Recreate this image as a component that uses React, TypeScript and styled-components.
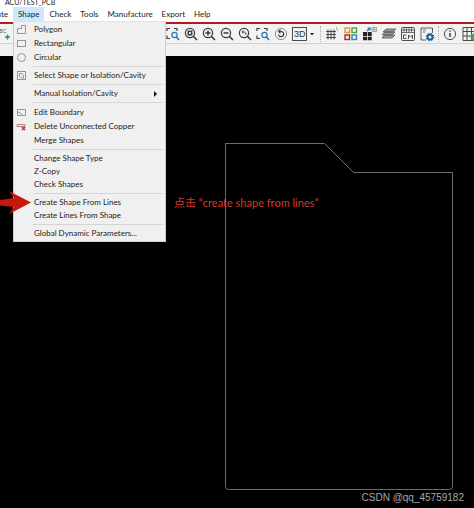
import React from "react";
import styled, { createGlobalStyle, css } from "styled-components";

const GlobalStyle = createGlobalStyle`
  * { box-sizing: border-box; }
  body { margin: 0; background: #000; font-family: Lato, "Noto Sans", sans-serif; color: #222; }
`;

const Window = styled.div`
  position: relative;
  display: flex;
  flex-direction: column;
  min-height: 100vh;
  overflow: hidden;
`;

const TitleBar = styled.header`
  display: flex;
  align-items: flex-end;
  height: 7px;
  padding-left: 5px;
  overflow: hidden;
  background: #fff;
  font-size: 7px;
  line-height: 10px;
  white-space: nowrap;
`;

const MenuBar = styled.nav`
  display: flex;
  gap: 1px;
  height: 15px;
  background: #fff;
`;

const MenuButton = styled.button<{ $open?: boolean; $clipped?: boolean }>`
  height: 14px;
  padding: 0 ${(p) => (p.$open ? "5px" : "4px")};
  border: 0;
  background: ${(p) => (p.$open ? "#cce8fb" : "transparent")};
  color: #222;
  font: 8px/14px Lato, "Noto Sans", sans-serif;
  white-space: nowrap;
  ${(p) => p.$clipped && css`
    width: 12px;
    padding: 0 4px 0 0;
    display: flex;
    justify-content: flex-end;
    overflow: hidden;
  `}
`;

const ToolBar = styled.div`
  display: flex;
  align-items: center;
  height: 22px;
  border-top: 2px solid #b01c22;
  border-bottom: 1px solid #d2d2d2;
  background: #f2f2f2;
  overflow: hidden;
`;

const ToolGroup = styled.div<{ $start?: boolean; $loose?: boolean }>`
  display: flex;
  align-items: center;
  gap: ${(p) => (p.$loose ? "3px" : "2px")};
  flex: none;
  ${(p) => p.$start && css`
    width: 165px;
    justify-content: flex-start;
  `}
`;

const ToolButton = styled.button<{ $wide?: boolean }>`
  display: flex;
  flex: none;
  align-items: center;
  justify-content: center;
  width: ${(p) => (p.$wide ? "26px" : "16px")};
  height: 18px;
  padding: 0;
  border: 0;
  background: none;
`;

const Grip = styled.span`
  flex: none;
  width: 2px;
  height: 16px;
  margin: 0 2px 0 3px;
  border-left: 1px dotted #aaa;
`;

const SubBar = styled.div`
  height: 12px;
  background: #f0f0f0;
`;

const Workspace = styled.main`
  position: relative;
  flex: 1;
  background: #000;
`;

const Outline = styled.svg`
  position: absolute;
  left: 225px;
  top: 87px;
`;

const Note = styled.p`
  position: absolute;
  left: 174px;
  top: 139px;
  margin: 0;
  color: #d23b2c;
  font: 11px/16px Lato, "Noto Sans CJK SC", sans-serif;
  white-space: nowrap;
`;

const Watermark = styled.footer`
  position: absolute;
  right: 10px;
  bottom: 3px;
  color: #a8a8a8;
  font: 10px/14px "Liberation Sans", sans-serif;
`;

const Menu = styled.div`
  position: absolute;
  left: 13px;
  top: 21px;
  width: 153px;
  padding-bottom: 1px;
  border: 1px solid #ccc;
  border-top-color: #e2e2e2;
  background: #f0f0f0;
`;

const MenuItem = styled.button<{ $tall?: boolean }>`
  display: grid;
  grid-template-columns: 20px 1fr 12px;
  align-items: center;
  width: 100%;
  height: ${(p) => (p.$tall ? "14px" : "13px")};
  padding: 0;
  border: 0;
  background: none;
  color: #222;
  font: 8px/13px Lato, "Noto Sans", sans-serif;
  text-align: left;
  white-space: nowrap;
`;

const ItemIcon = styled.svg`
  margin-left: 2px;
`;

const Separator = styled.hr`
  height: 1px;
  margin: 2px 2px 2px 19px;
  border: 0;
  background: #d5d5d5;
`;

const Pointer = styled.svg`
  position: absolute;
  left: 0;
  top: 190px;
`;

const Glyph = ({ children, w = 16 }: { children: React.ReactNode; w?: number }) => (
  <svg width={w} height="16" viewBox={`0 0 ${w} 16`} fill="none" stroke="#3b3b3b" strokeWidth="1.2" aria-hidden="true">
    {children}
  </svg>
);

const Lens = ({ children }: { children?: React.ReactNode }) => (
  <Glyph>
    <circle cx="7" cy="7" r="4.6" />
    <path d="M10.4 10.4 14 14" strokeWidth="1.5" />
    {children}
  </Glyph>
);

const AreaLens = () => (
  <Glyph>
    <path d="M2 5V2.500H5M9 2.500H12V5M2 9.500V12.500H5" />
    <g stroke="#2878b4">
      <circle cx="9.500" cy="9" r="2.600" />
      <path d="m11.500 11 2.500 3" strokeWidth="1.500" />
    </g>
  </Glyph>
);

const viewTools: [string, React.ReactNode][] = [
  ["Zoom by points", <AreaLens />],
  ["Zoom fit", <Lens><rect x="5.300" y="5.300" width="3.400" height="3.400" strokeWidth="1.500" /></Lens>],
  ["Zoom in", <Lens><path d="M4.500 7h5M7 4.500v5" strokeWidth="1.500" /></Lens>],
  ["Zoom out", <Lens><path d="M4.500 7h5" strokeWidth="1.500" /></Lens>],
  ["Zoom previous", <Lens><path d="M5 6h2.500q1.500 0 1.500 3M6.500 4.500 5 6l1.500 1.500" strokeWidth=".9" /></Lens>],
  ["Zoom selection", <AreaLens />],
  ["Redraw", <Glyph><circle cx="8" cy="8" r="5.600" stroke="#777" strokeWidth=".8" /><path d="M6 5.500h2.500a2.600 2.600 0 1 1-3 3M7.500 3.700 5.700 5.500l1.800 1.700" /></Glyph>],
];

const displayTools: [string, React.ReactNode][] = [
  ["Grid", <Glyph><path d="M2 5.500h10M2 8.500h10M2 11.500h10M4 3.500v10M7 3.500v10M10 3.500v10" strokeWidth=".9" /><path d="M12 2h1M13.500 3.500v1" strokeWidth=".8" /></Glyph>],
  ["Colors", <Glyph><g strokeWidth="1.400"><rect x="2" y="2" width="4.500" height="4.500" stroke="#d3a52b" /><rect x="9" y="2" width="4.500" height="4.500" stroke="#5c9d3b" /><rect x="2" y="9" width="4.500" height="4.500" stroke="#b52626" /><rect x="9" y="9" width="4.500" height="4.500" stroke="#3185b5" /></g></Glyph>],
  ["Shadow mode", <Glyph><path d="M1 6h4v4H1zM1 10.700h4v3.500H1zM5.700 6h4v4h-4zM5.700 10.700h4v3.500h-4z" fill="#222" stroke="none" /><path d="m5 5 3-3M5.500 2H8v2.500" stroke="#2878b4" /><path d="M10 1.500h4.500v4H10zM12.200 1.500v4M10 3.500h4.500" stroke="#888" strokeWidth=".7" /></Glyph>],
  ["Layers", <Glyph><path d="m1 12 3-3h10l-3 3zM1 9l3-3h10l-3 3zM2 6l3-3h10l-3 3z" fill="#999" stroke="#555" strokeWidth=".8" /></Glyph>],
  ["Constraint manager", <Glyph><rect x="1.500" y="1.500" width="13" height="13" rx="1" strokeWidth=".9" /><path d="M1.500 4h13M1.500 6.500h13M4 1.500v5M6.500 1.500v5M9 1.500v5M11.500 1.500v5" strokeWidth=".7" /><path d="M6.500 9h-3v3.500h3M8.500 13V9l2 2 2-2v4" strokeWidth=".9" /></Glyph>],
  ["Parameters", <Glyph><path d="M7 14H2V2h11.500v5" strokeWidth=".8" /><path d="M4 4h3M4 6h2" strokeWidth=".7" /><circle cx="11" cy="11" r="2.500" stroke="#225f91" strokeWidth="2" /><circle cx="11" cy="11" r="3.800" stroke="#225f91" strokeWidth="1" strokeDasharray="1.500 1.500" /></Glyph>],
];

type Item = { label: string; icon?: React.ReactNode; submenu?: boolean; tall?: boolean };

const groups: Item[][] = [
  [
    { label: "Polygon", tall: true, icon: <path d="M1.500 9.500V4.500h4V1.500h4v8z" /> },
    { label: "Rectangular", tall: true, icon: <rect x="1.500" y="2.500" width="8" height="6" /> },
    { label: "Circular", tall: true, icon: <circle cx="5.500" cy="5.500" r="4" /> },
  ],
  [{ label: "Select Shape or Isolation/Cavity", icon: <><rect x="1.500" y="1.500" width="8" height="8" /><path d="M3.500 3.500h2.500l1.500 2v2.500h-2l-2-2z" /></> }],
  [{ label: "Manual Isolation/Cavity", submenu: true }],
  [
    { label: "Edit Boundary", tall: true, icon: <path d="M1.500 2.500h8v6h-8zM1.500 5l3 1 2 2.500" /> },
    { label: "Delete Unconnected Copper", tall: true, icon: <><path d="M1 3.500h8v2H1z" stroke="#aa7770" /><path d="m6 6 3 3M9 6 6 9" stroke="#be3029" strokeWidth="1.400" /></> },
    { label: "Merge Shapes", tall: true },
  ],
  [{ label: "Change Shape Type" }, { label: "Z-Copy" }, { label: "Check Shapes" }],
  [{ label: "Create Shape From Lines" }, { label: "Create Lines From Shape" }],
  [{ label: "Global Dynamic Parameters..." }],
];

export default function App() {
  return (
    <Window>
      <GlobalStyle />
      <TitleBar>ACU/TEST_PCB</TitleBar>
      <MenuBar aria-label="Main menu">
        <MenuButton $clipped>Route</MenuButton>
        <MenuButton $open>Shape</MenuButton>
        {["Check", "Tools", "Manufacture", "Export", "Help"].map((name) => (
          <MenuButton key={name}>{name}</MenuButton>
        ))}
      </MenuBar>
      <ToolBar role="toolbar" aria-label="Tools">
        <ToolGroup $start>
          <ToolButton aria-label="Add text">
            <Glyph>
              <text x="-4" y="7" fontSize="5" fill="#555" stroke="none">ABC</text>
              <path d="M5 11h5M7.500 8.500v5" stroke="#35923e" strokeWidth="1.500" />
            </Glyph>
          </ToolButton>
        </ToolGroup>
        <ToolGroup>
          {viewTools.map(([name, icon]) => <ToolButton key={name} aria-label={name}>{icon}</ToolButton>)}
          <ToolButton $wide aria-label="3D view">
            <Glyph w={26}>
              <rect x="1.500" y="1.500" width="14" height="13" strokeWidth=".9" />
              <text x="3" y="11" fontSize="9" fill="#333" stroke="none">3D</text>
              <path d="M19 7h4l-2 2.500z" fill="#222" stroke="none" />
            </Glyph>
          </ToolButton>
        </ToolGroup>
        <Grip />
        <ToolGroup $loose>
          {displayTools.map(([name, icon]) => <ToolButton key={name} aria-label={name}>{icon}</ToolButton>)}
        </ToolGroup>
        <Grip />
        <ToolGroup $loose>
          <ToolButton aria-label="Show element">
            <Glyph><circle cx="8" cy="8" r="5.600" strokeWidth=".9" /><path d="M8 7v4M8 4.500v1.300" strokeWidth="1.500" /></Glyph>
          </ToolButton>
          <ToolButton aria-label="Spreadsheet">
            <Glyph><path d="M2 1.500h14v13H2zM2 5.500h14M2 10h14M6 1.500v13M10.500 1.500v13" strokeWidth=".9" /><circle cx="13" cy="11" r="3.500" fill="#3fa84a" stroke="none" /></Glyph>
          </ToolButton>
        </ToolGroup>
      </ToolBar>
      <SubBar />
      <Workspace>
        <Outline width="229" height="348" viewBox="0 0 229 348" fill="none" stroke="#6c6c6c" aria-label="Board outline">
          <path d="M.5.5H99.500L128.500 29.500H227.500V343.500Q227.500 346.500 224.500 346.500H3.500Q.5 346.500.5 343.500Z" />
        </Outline>
        <Note>点击 “create shape from lines”</Note>
        <Watermark>CSDN @qq_45759182</Watermark>
      </Workspace>
      <Menu aria-label="Shape">
        {groups.map((items, index) => (
          <React.Fragment key={items[0].label}>
            {index > 0 && <Separator />}
            {items.map(({ label, icon, submenu, tall }) => (
              <MenuItem key={label} $tall={tall}>
                <ItemIcon width="11" height="11" viewBox="0 0 11 11" fill="none" stroke="#8a8a8a" strokeWidth=".9" aria-hidden="true">{icon}</ItemIcon>
                <span>{label}</span>
                {submenu && <svg width="5" height="6" viewBox="0 0 5 6" aria-hidden="true"><path d="M1 0 4 3 1 6Z" fill="#111" /></svg>}
              </MenuItem>
            ))}
          </React.Fragment>
        ))}
      </Menu>
      <Pointer width="32" height="25" viewBox="0 0 32 25" aria-hidden="true">
        <path d="M0 10 14 8 9 1 31 12.500 9 24 14 17 0 15.500Z" fill="#c8170c" />
      </Pointer>
    </Window>
  );
}
